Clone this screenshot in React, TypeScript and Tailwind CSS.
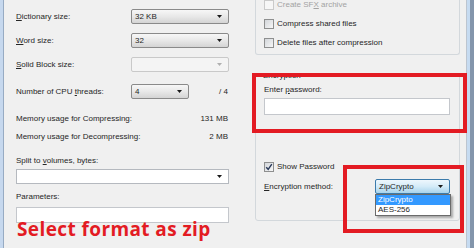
import React from "react";

const Arrow = ({ muted }: { muted?: boolean }) => (
  <svg width="5" height="3" viewBox="0 0 5 3" className="shrink-0">
    <path d="M0 0H5L2.5 3Z" fill={muted ? "#b0b0b0" : "#1a1a1a"} />
  </svg>
);

const Combo = ({ value, className = "" }: { value?: string; className?: string }) => (
  <div
    className={`flex items-center h-[15px] rounded-[2px] border border-[#8a8a8a] bg-linear-to-b from-[#f7f7f7] via-[#e8e8e8] to-[#d4d4d4] pl-[3px] pr-[6px] ${className}`}
  >
    <span className="flex-1 leading-none">{value}</span>
    <Arrow />
  </div>
);

const CheckBox = ({ checked, disabled }: { checked?: boolean; disabled?: boolean }) => (
  <span
    className={`flex items-center justify-center w-[10px] h-[10px] shrink-0 border ${
      disabled
        ? "border-[#cacaca] bg-[#f6f6f6]"
        : "border-[#8e8f8f] bg-linear-to-br from-[#d3d6da] to-[#f7f7f7]"
    }`}
  >
    {checked && (
      <svg width="8" height="8" viewBox="0 0 8 8">
        <path d="M1.2 4.2L3.2 6.3L6.8 1.2" fill="none" stroke="#2a3a5a" strokeWidth="1.4" />
      </svg>
    )}
  </span>
);

const U = ({ children }: { children: React.ReactNode }) => <span className="underline">{children}</span>;

export default function App() {
  return (
    <div className="relative flex w-[474px] h-[248px] overflow-hidden bg-[#f0f0f0] text-[8px] text-[#262626] font-['Liberation_Sans',Arial,sans-serif]">
      {/* window edge left */}
      <div className="flex w-[4px] shrink-0">
        <div className="w-[3px] bg-[#c6d8ee]" />
        <div className="w-[1px] bg-[#97abc3]" />
      </div>

      {/* compression settings */}
      <div className="w-[251px] shrink-0 pl-[12px] pt-[9px]">
        <div className="flex flex-col w-[213px]">
          <div className="flex items-center h-[15px]">
            <span className="flex-1">
              <U>D</U>ictionary size:
            </span>
            <Combo value="32 KB" className="w-[98px]" />
          </div>
          <div className="flex items-center h-[15px] mt-[9px]">
            <span className="flex-1">
              <U>W</U>ord size:
            </span>
            <Combo value="32" className="w-[98px]" />
          </div>
          <div className="flex items-center h-[15px] mt-[9px]">
            <span className="flex-1">
              <U>S</U>olid Block size:
            </span>
            <div className="flex items-center justify-end w-[98px] h-[15px] rounded-[2px] border border-[#c9c9c9] bg-[#f4f4f4] pr-[6px]">
              <Arrow muted />
            </div>
          </div>
          <div className="flex items-center h-[15px] mt-[12px]">
            <span className="w-[115px]">
              Number of CPU <U>t</U>hreads:
            </span>
            <Combo value="4" className="w-[58px]" />
            <span className="ml-auto pr-[1px]">/ 4</span>
          </div>
          <div className="flex items-center justify-between h-[12px] mt-[14px] pr-[1px]">
            <span>Memory usage for Compressing:</span>
            <span>131 MB</span>
          </div>
          <div className="flex items-center justify-between h-[12px] mt-[6px] pr-[1px]">
            <span>Memory usage for Decompressing:</span>
            <span>2 MB</span>
          </div>
          <div className="flex items-center h-[12px] mt-[12px]">
            <span>
              Split to <U>v</U>olumes, bytes:
            </span>
          </div>
          <div className="flex items-center justify-end h-[15px] mt-[2px] border border-[#b5b9bf] bg-white pr-[6px]">
            <Arrow />
          </div>
          <div className="flex items-center h-[12px] mt-[7px]">
            <span>Parameters:</span>
          </div>
          <div className="h-[16px] mt-[4px] border border-[#c4c7cc] bg-white" />
          <div className="h-[22px] leading-[13px] pl-[1px] text-[19px] tracking-[0.4px] font-bold text-[#e31b23] font-['Open_Sans',sans-serif] whitespace-nowrap">
            Select format as zip
          </div>
        </div>
      </div>

      {/* options + encryption */}
      <div className="flex flex-col w-[205px] shrink-0">
        <div className="flex flex-col gap-[9px] h-[55px] pl-[8px] border-x border-b border-[#d3d8dc] rounded-b-[3px]">
          <div className="flex items-center gap-[3px] h-[10px] text-[#a3a3a3]">
            <CheckBox disabled />
            <span>
              Create SF<U>X</U> archive
            </span>
          </div>
          <div className="flex items-center gap-[3px] h-[10px]">
            <CheckBox />
            <span>Compress shared files</span>
          </div>
          <div className="flex items-center gap-[3px] h-[10px]">
            <CheckBox />
            <span>Delete files after compression</span>
          </div>
        </div>

        <div className="relative mt-[19px] h-[147px] border border-[#d3d8dc] rounded-[3px] pl-[8px] pr-[9px] pt-[9px]">
          <span className="absolute left-[6px] -top-[4px] px-[1px] leading-[10px] bg-[#f0f0f0]">Encryption</span>
          <div className="flex items-center h-[12px]">
            <span>
              Enter <U>p</U>assword:
            </span>
          </div>
          <div className="h-[17px] mt-[2px] border border-[#c4c7cc] bg-white" />
          <div className="flex items-center gap-[3px] h-[10px] mt-[47px]">
            <CheckBox checked />
            <span>Show Password</span>
          </div>
          <div className="flex items-center h-[15px] mt-[7px]">
            <span>
              <U>E</U>ncryption method:
            </span>
            <div className="relative ml-auto w-[75px]">
              <div className="flex items-center h-[15px] rounded-[2px] border border-[#3c7bab] bg-linear-to-b from-[#eef7fd] via-[#d4ebf8] to-[#a8d4ec] pl-[3px] pr-[6px]">
                <span className="flex-1 leading-none">ZipCrypto</span>
                <Arrow />
              </div>
              <div className="absolute top-[15px] left-0 w-[76px] border border-[#6b6b6b] bg-white shadow-[2px_2px_2px_rgba(0,0,0,0.3)]">
                <div className="h-[10px] leading-[10px] pl-[2px] bg-[#3399ff] text-white">ZipCrypto</div>
                <div className="h-[10px] leading-[10px] pl-[2px]">AES-256</div>
              </div>
            </div>
          </div>
        </div>
      </div>

      <div className="w-[6px] shrink-0" />

      {/* window edge right */}
      <div className="flex w-[8px] shrink-0">
        <div className="w-[1px] bg-[#bcc5d0]" />
        <div className="w-[3px] bg-[#c6dbf1]" />
        <div className="w-[4px] bg-[#8395ab]" />
      </div>

      {/* annotation boxes */}
      <div className="absolute left-[252px] top-[73px] w-[215px] h-[60px] border-[4px] border-[#e31b23]" />
      <div className="absolute left-[343px] top-[165px] w-[121px] h-[68px] border-[4px] border-[#e31b23]" />
    </div>
  );
}
